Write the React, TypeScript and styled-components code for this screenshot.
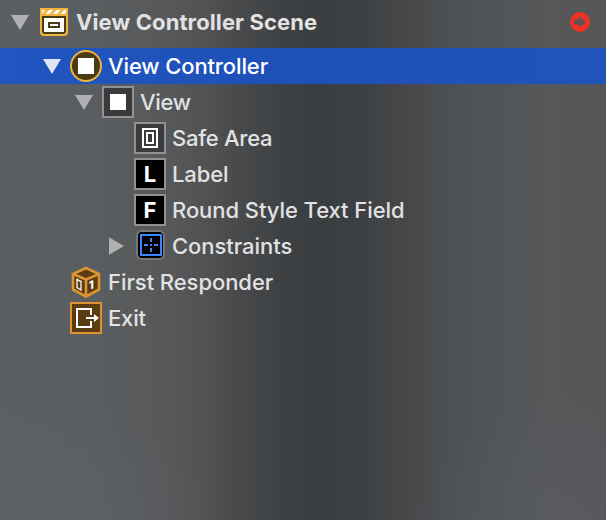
import React from "react";
import styled, { createGlobalStyle } from "styled-components";

const GlobalStyle = createGlobalStyle`
  html, body { margin: 0; padding: 0; background: #55585a; }
`;

const Outline = styled.main`
  box-sizing: border-box;
  width: 606px;
  height: 520px;
  overflow: hidden;
  display: flex;
  flex-direction: column;
  color: #e2e2e3;
  font-family: Inter, "Liberation Sans", sans-serif;
  font-size: 22px;
  background:
    radial-gradient(ellipse 190px 150px at 50px 540px, rgba(98, 102, 114, 0.4), rgba(98, 102, 114, 0)),
    radial-gradient(ellipse 150px 150px at 560px 540px, rgba(92, 96, 110, 0.4), rgba(92, 96, 110, 0)),
    linear-gradient(
      90deg,
      #5b5f61 0,
      #5a5e60 90px,
      #575859 165px,
      #505253 205px,
      #47494b 240px,
      #3c3f41 295px,
      #3b3e40 325px,
      #3d4042 360px,
      #434547 390px,
      #48484a 412px,
      #4d5052 445px,
      #515558 500px,
      #565758 550px,
      #565658 606px
    );
`;

const Header = styled.header`
  box-sizing: border-box;
  height: 48px;
  padding: 0 16px 4px 10px;
  display: flex;
  align-items: center;
`;

const Row = styled.div<{ $depth: number; $selected?: boolean }>`
  height: 36px;
  flex: none;
  padding-left: ${(p) => 10 + p.$depth * 32}px;
  display: flex;
  align-items: center;
  color: ${(p) => (p.$selected ? "#ffffff" : "inherit")};
  background: ${(p) => (p.$selected ? "linear-gradient(90deg, #2155c0, #1e50b7 50%, #2153bc)" : "none")};
`;

const ArrowSlot = styled.span<{ $selected?: boolean }>`
  width: 20px;
  height: 20px;
  margin-right: 8px;
  color: ${(p) => (p.$selected ? "#dde5f6" : "#b1b1b3")};
  svg { display: block; }
`;

const IconSlot = styled.span`
  width: 32px;
  height: 32px;
  margin-right: 6px;
  svg { display: block; }
`;

const Label = styled.span<{ $spacing: number; $bold?: boolean }>`
  line-height: 32px;
  white-space: nowrap;
  font-weight: ${(p) => (p.$bold ? 700 : 500)};
  letter-spacing: ${(p) => p.$spacing}px;
`;

const Tile = styled.span<{ $fill?: string; $edge?: string; $round?: boolean }>`
  box-sizing: border-box;
  width: 32px;
  height: 32px;
  display: flex;
  align-items: center;
  justify-content: center;
  border: 2px solid ${(p) => p.$edge ?? "#919194"};
  border-radius: ${(p) => (p.$round ? "50%" : "0")};
  background: ${(p) => p.$fill ?? "#3a393c"};
`;

const WhiteSquare = styled.span`
  width: 16px;
  height: 16px;
  background: #fff;
`;

const Letter = styled.span`
  color: #fff;
  font-size: 22px;
  font-weight: 700;
  line-height: 28px;
`;

const IssueBadge = styled.span`
  width: 20px;
  height: 20px;
  margin-left: auto;
  svg { display: block; }
`;

function Disclosure({ open, selected }: { open?: boolean; selected?: boolean }) {
  return (
    <ArrowSlot $selected={selected}>
      {open !== undefined && (
        <svg width="20" height="20" viewBox="0 0 20 20" fill="currentColor">
          <path d={open ? "M1 3H19L10 18Z" : "M3 1.2V18.8L18 10Z"} />
        </svg>
      )}
    </ArrowSlot>
  );
}

const SceneIcon = () => (
  <svg width="32" height="32" viewBox="0 0 32 32">
    <path d="M2 2H30V26Q30 30 26 30H6Q2 30 2 26Z" fill="#f1b33f" />
    <path d="M4 10H28V25Q28 28 25 28H7Q4 28 4 25Z" fill="#493c12" />
    <path d="M4 4H7L4 8ZM11 4H15L11.5 8H7.5ZM18.5 4H22.5L19 8H15ZM26 4H28V6L26.5 8H22.5Z" fill="#fff" />
    <path d="M6 12H26V26H6Z" fill="#fff" />
    <path d="M11 17H21V21H11Z" fill="#fff" stroke="#493c12" strokeWidth="2" />
  </svg>
);

const SafeAreaIcon = () => (
  <svg width="28" height="28" viewBox="2 2 28 28" fill="none" stroke="#fff" strokeWidth="2">
    <path d="M9 7H23V25H9ZM13 11H19V21H13Z" />
  </svg>
);

const ConstraintsIcon = () => (
  <svg width="32" height="32" viewBox="0 0 32 32">
    <rect x="3" y="1" width="27" height="28" rx="5" fill="#000" stroke="#767779" strokeWidth="2" />
    <path
      d="M7 5H27V25H7ZM10 15H14M16 15H18M20 15H24M17 8V12M17 18V22"
      fill="none"
      stroke="#3a86ff"
      strokeWidth="2"
    />
  </svg>
);

const CubeText = styled.text`
  font: 800 11.5px Inter, sans-serif;
  fill: #fff;
`;

const ResponderIcon = () => (
  <svg width="32" height="32" viewBox="0 0 32 32">
    <path
      d="M16 2L29 8V23.5L16 30.5L3 23.5V8Z"
      fill="#5a3b12"
      stroke="#dc9332"
      strokeWidth="2.6"
      strokeLinejoin="round"
    />
    <path d="M3 8L16 13.5L29 8M16 13.5V30" fill="none" stroke="#dc9332" strokeWidth="2.6" />
    <path d="M7 13.5L11 15.5V24L7 21.5Z" fill="none" stroke="#f4f0ea" strokeWidth="1.4" />
    <CubeText x="0" y="0" transform="matrix(1 -0.2 0 1 18.8 23.4)">1</CubeText>
  </svg>
);

const ExitIcon = () => (
  <svg width="28" height="28" viewBox="2 2 28 28" fill="none" stroke="#fff" strokeWidth="2">
    <path d="M21 13V7H7V25H21V19M16 16H25" />
    <path d="M24 12L29 16L24 20Z" fill="#fff" stroke="none" />
  </svg>
);

export default function App() {
  return (
    <>
      <GlobalStyle />
      <Outline>
        <Header>
          <Disclosure open />
          <IconSlot><SceneIcon /></IconSlot>
          <Label $bold $spacing={0.11}>View Controller Scene</Label>
          <IssueBadge>
            <svg width="20" height="20" viewBox="0 0 20 20">
              <circle cx="10" cy="10" r="10" fill="#f03226" />
              <path d="M4 7.5H9.5V4L16 10L9.5 16V12.5H4Z" fill="#5f5351" />
            </svg>
          </IssueBadge>
        </Header>
        <Row $depth={1} $selected>
          <Disclosure open selected />
          <IconSlot><Tile $round $fill="#493c12" $edge="#f1b33f"><WhiteSquare /></Tile></IconSlot>
          <Label $spacing={-0.12}>View Controller</Label>
        </Row>
        <Row $depth={2}>
          <Disclosure open />
          <IconSlot><Tile><WhiteSquare /></Tile></IconSlot>
          <Label $spacing={-0.35}>View</Label>
        </Row>
        <Row $depth={3}>
          <Disclosure />
          <IconSlot><Tile><SafeAreaIcon /></Tile></IconSlot>
          <Label $spacing={-0.25}>Safe Area</Label>
        </Row>
        <Row $depth={3}>
          <Disclosure />
          <IconSlot><Tile $fill="#000"><Letter>L</Letter></Tile></IconSlot>
          <Label $spacing={-0.1}>Label</Label>
        </Row>
        <Row $depth={3}>
          <Disclosure />
          <IconSlot><Tile $fill="#000"><Letter>F</Letter></Tile></IconSlot>
          <Label $spacing={-0.07}>Round Style Text Field</Label>
        </Row>
        <Row $depth={3}>
          <Disclosure open={false} />
          <IconSlot><ConstraintsIcon /></IconSlot>
          <Label $spacing={-0.05}>Constraints</Label>
        </Row>
        <Row $depth={1}>
          <Disclosure />
          <IconSlot><ResponderIcon /></IconSlot>
          <Label $spacing={-0.06}>First Responder</Label>
        </Row>
        <Row $depth={1}>
          <Disclosure />
          <IconSlot><Tile $fill="#5a3b12" $edge="#dc9332"><ExitIcon /></Tile></IconSlot>
          <Label $spacing={-0.15}>Exit</Label>
        </Row>
      </Outline>
    </>
  );
}
